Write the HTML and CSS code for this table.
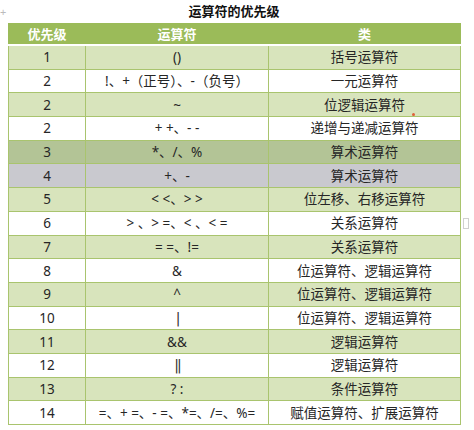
FILE: index.html
```html
<!DOCTYPE html>
<html lang="zh">
<head>
<meta charset="utf-8">
<link rel="stylesheet" href="styles.css">
</head>
<body>
<div class="page">
  <h1 class="title">运算符的优先级</h1>
  <table class="prec">
    <colgroup><col class="c1"><col class="c2"><col class="c3"></colgroup>
    <thead>
      <tr><th>优先级</th><th>运算符</th><th>类</th></tr>
    </thead>
    <tbody>
      <tr class="g"><td>1</td><td>()</td><td>括号运算符</td></tr>
      <tr class="w"><td>2</td><td>!、+（正号）、-（负号）</td><td>一元运算符</td></tr>
      <tr class="g"><td>2</td><td>~</td><td>位逻辑运算符</td></tr>
      <tr class="w"><td>2</td><td>+ +、- -</td><td>递增与递减运算符</td></tr>
      <tr class="d"><td>3</td><td>*、/、%</td><td>算术运算符</td></tr>
      <tr class="s"><td>4</td><td>+、-</td><td>算术运算符</td></tr>
      <tr class="g"><td>5</td><td>&lt; &lt;、&gt; &gt;</td><td>位左移、右移运算符</td></tr>
      <tr class="w"><td>6</td><td>&gt; 、&gt; =、&lt; 、&lt; =</td><td>关系运算符</td></tr>
      <tr class="g"><td>7</td><td>= =、!=</td><td>关系运算符</td></tr>
      <tr class="w"><td>8</td><td>&amp;</td><td>位运算符、逻辑运算符</td></tr>
      <tr class="g"><td>9</td><td>^</td><td>位运算符、逻辑运算符</td></tr>
      <tr class="w"><td>10</td><td><span class="pipe">|</span></td><td>位运算符、逻辑运算符</td></tr>
      <tr class="g"><td>11</td><td>&amp;&amp;</td><td>逻辑运算符</td></tr>
      <tr class="w"><td>12</td><td><span class="pipe">||</span></td><td>逻辑运算符</td></tr>
      <tr class="g"><td>13</td><td>? :</td><td>条件运算符</td></tr>
      <tr class="w"><td>14</td><td>=、+ =、- =、*=、/=、%=</td><td>赋值运算符、扩展运算符</td></tr>
    </tbody>
  </table>
  <span class="cross">+</span>
  <span class="reddot"></span>
  <span class="handle"></span>
</div>
</body>
</html>
```

FILE: styles.css
```css
html, body {
  margin: 0;
  padding: 0;
  background: #ffffff;
}
.page {
  position: relative;
  width: 474px;
  height: 430px;
  font-family: "Noto Sans", "Noto Sans CJK SC", sans-serif;
  color: #222222;
}
.title {
  margin: 0;
  width: 468px;
  height: 23px;
  line-height: 22px;
  text-align: center;
  font-size: 13px;
  font-weight: bold;
  color: #111111;
}
.prec {
  margin-left: 8px;
  width: 452px;
  border-collapse: collapse;
  table-layout: fixed;
  font-size: 13.5px;
}
.c1 { width: 77px; }
.c2 { width: 183px; }
.c3 { width: 192px; }
.prec th {
  background: #9bbb59;
  color: #ffffff;
  font-size: 13px;
  font-weight: bold;
  height: 20px;
  padding: 0;
  line-height: 20px;
  border: 1px solid #9bbb59;
  border-bottom: 2px solid #ffffff;
}
.prec td {
  height: 22.7px;
  padding: 0;
  text-align: center;
  line-height: 22px;
  border: 1px solid #a9c46e;
  color: #262626;
}
.pipe {
  font-family: "DejaVu Sans", sans-serif;
  font-size: 14px;
  letter-spacing: -2px;
  color: #333333;
}
.g td { background: #d8e4bc; }
.w td { background: #ffffff; }
.d td { background: #b3c496; }
.s td { background: #c9c9cf; }
.cross {
  position: absolute;
  left: 0px;
  top: 6px;
  font-size: 11px;
  color: #bbbbbb;
  line-height: 11px;
}
.reddot {
  position: absolute;
  left: 412px;
  top: 113px;
  width: 3px;
  height: 3px;
  border-radius: 50%;
  background: #e0603a;
}
.handle {
  position: absolute;
  left: 463px;
  top: 218px;
  width: 4px;
  height: 9px;
  border: 1px solid #d0d0d0;
  background: #ffffff;
}
```
